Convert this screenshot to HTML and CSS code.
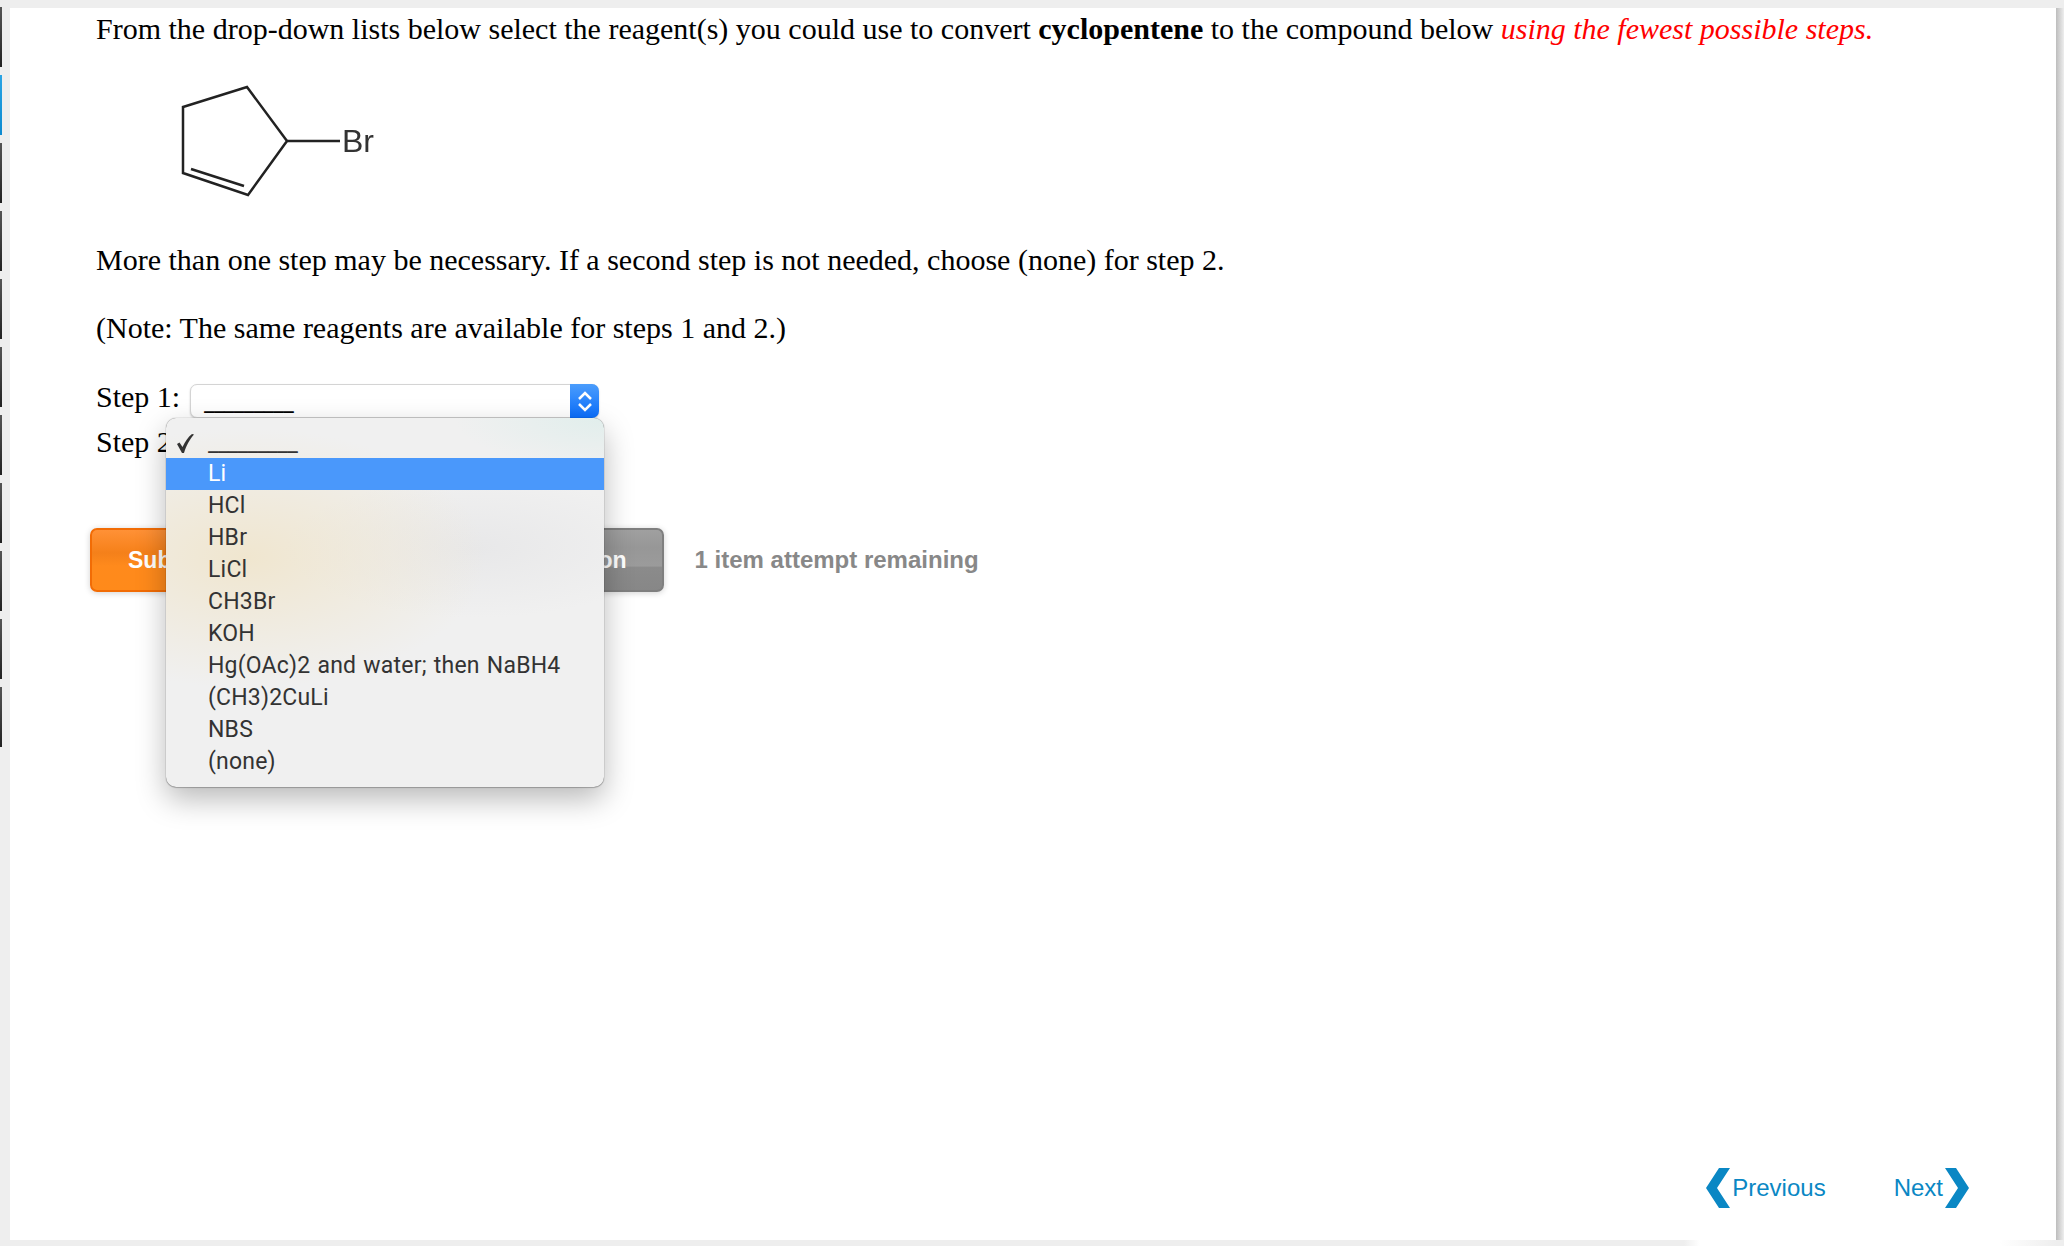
FILE: index.html
```html
<!DOCTYPE html>
<html lang="en">
<head>
    <meta charset="UTF-8">
    <title>Question</title>
    <link rel="stylesheet" href="styles.css">
</head>
<body>
    <div class="top-strip"></div>
    <div class="middle">
        <div class="tabs">
            <div class="tab"></div>
            <div class="tab tab-active"></div>
            <div class="tab"></div>
            <div class="tab"></div>
            <div class="tab"></div>
            <div class="tab"></div>
            <div class="tab"></div>
            <div class="tab"></div>
            <div class="tab"></div>
            <div class="tab"></div>
            <div class="tab"></div>
        </div>

        <div class="page">
            <p class="intro">From the drop-down lists below select the reagent(s) you could use to convert <b>cyclopentene</b> to the compound below <i class="hint">using the fewest possible steps.</i></p>

            <svg class="molecule" width="200" height="130" viewBox="0 0 200 130">
                <path class="bond" d="M6 33 L70 13 L110 67 L71 121 L6 99 Z"/>
                <path class="bond" d="M14 95 L67 112"/>
                <path class="bond" d="M110 67 L163 67"/>
                <text class="atom" x="165" y="78">Br</text>
            </svg>

            <p class="line-more">More than one step may be necessary. If a second step is not needed, choose (none) for step 2.</p>
            <p class="line-note">(Note: The same reagents are available for steps 1 and 2.)</p>

            <div class="steps">
                <div class="step step-one">
                    <span class="step-label">Step 1:</span>
                    <div class="select">
                        <span class="select-value">_________</span>
                        <span class="select-arrow">
                            <svg width="14" height="21" viewBox="0 0 14 21">
                                <path d="M1 8 L7 2 L13 8 M1 13 L7 19 L13 13"/>
                            </svg>
                        </span>
                    </div>
                </div>
                <div class="step">
                    <span class="step-label">Step 2:</span>
                </div>

                <ul class="menu">
                    <li class="menu-item menu-item-blank">
                        <svg class="check" width="17" height="19" viewBox="0 0 17 19"><path d="M0 10 L2.500 8.500 L5.500 13 C8 8 11 3 15 0 L17 0.500 C13 5 9 12 7 19 L5 19 Z"/></svg>
                        <span class="blank">_________</span>
                    </li>
                    <li class="menu-item menu-item-active">Li</li>
                    <li class="menu-item">HCl</li>
                    <li class="menu-item">HBr</li>
                    <li class="menu-item">LiCl</li>
                    <li class="menu-item">CH3Br</li>
                    <li class="menu-item">KOH</li>
                    <li class="menu-item">Hg(OAc)2 and water; then NaBH4</li>
                    <li class="menu-item">(CH3)2CuLi</li>
                    <li class="menu-item">NBS</li>
                    <li class="menu-item">(none)</li>
                </ul>
            </div>

            <div class="actions">
                <button class="btn btn-submit">Submit Answer</button>
                <button class="btn btn-retry">Try Another Version</button>
                <span class="attempts">1 item attempt remaining</span>
            </div>

            <div class="pager">
                <a class="pager-link">
                    <svg width="26" height="42" viewBox="0 0 26 42"><path d="M14 1 H25 L12 21 L25 41 H14 L1 21 Z"/></svg>
                    Previous
                </a>
                <a class="pager-link pager-next">
                    Next
                    <svg width="26" height="42" viewBox="0 0 26 42"><path d="M1 1 H12 L25 21 L12 41 H1 L14 21 Z"/></svg>
                </a>
            </div>
        </div>

        <div class="edge"></div>
    </div>
    <div class="bottom-strip"></div>
</body>
</html>
```

FILE: styles.css
```css
html, body {
    margin: 0;
    padding: 0;
    height: 1246px;
    overflow: hidden;
}

body {
    display: flex;
    flex-direction: column;
    background-color: #fff;
    font-family: 'Liberation Serif', serif;
    color: #000;
}

.top-strip {
    height: 8px;
    background-color: #eee;
}

.bottom-strip {
    height: 6px;
    background: linear-gradient(90deg, #eee 1684px, #fff 1700px, #fff 2000px, #eee 2056px);
}

.middle {
    flex: 1;
    display: flex;
    min-height: 0;
}

/* question tabs down the left side */
.tabs {
    width: 10px;
    flex-shrink: 0;
    display: flex;
    flex-direction: column;
    gap: 8px;
    background-color: #eee;
    margin-top: -1px;
}

.tab {
    width: 2px;
    height: 60px;
    background: linear-gradient(180deg, #555, #3c3c3c 50%, #222);
}

.tab-active {
    background: linear-gradient(180deg, #2aa4e4, #0d8ad0);
}

.page {
    flex: 1;
    display: flex;
    flex-direction: column;
    padding-left: 86px;
    background-color: #fff;
    min-width: 0;
}

.edge {
    width: 8px;
    flex-shrink: 0;
    background: linear-gradient(90deg, #bdbdbd, #eee);
}

p {
    margin: 0;
    font-size: 30px;
    line-height: 32px;
}

.intro {
    margin-top: 5px;
    white-space: nowrap;
}

.hint {
    color: #f00;
}

.molecule {
    display: block;
    margin: 29px 0 0 81px;
    filter: blur(0.5px);
}

.bond {
    fill: none;
    stroke: #222;
    stroke-width: 2.5;
}

.atom {
    font-family: 'Liberation Sans', sans-serif;
    font-size: 32px;
    fill: #333;
}

.line-more {
    margin-top: 40px;
}

.line-note {
    margin-top: 36px;
}

.steps {
    position: relative;
    margin-top: 40px;
}

.step {
    display: flex;
    align-items: center;
    height: 34px;
    margin-bottom: 11px;
    font-size: 30px;
}

.step-label {
    width: 94px;
    flex-shrink: 0;
    padding-bottom: 9px;
}

.select {
    width: 409px;
    height: 34px;
    box-sizing: border-box;
    display: flex;
    justify-content: space-between;
    border: 1px solid #d4d4d4;
    border-radius: 7px;
    background-color: #fff;
    box-shadow: 0 1px 2px rgba(0, 0, 0, 0.2);
    font-family: 'Roboto', sans-serif;
    font-size: 23px;
}

.select-value {
    padding-left: 13px;
    line-height: 38px;
    letter-spacing: -0.45px;
}

.select-arrow {
    width: 29px;
    margin: -1px;
    display: flex;
    align-items: center;
    justify-content: center;
    border-radius: 0 7px 7px 0;
    background: linear-gradient(180deg, #4b9dfc, #0a6dfb);
}

.select-arrow path {
    fill: none;
    stroke: #fff;
    stroke-width: 2.5;
}

.menu {
    position: absolute;
    left: 70px;
    top: 34px;
    width: 438px;
    margin: 0;
    padding: 8px 0 9px;
    list-style: none;
    box-sizing: border-box;
    border-radius: 10px;
    background:
        radial-gradient(ellipse 240px 130px at 80px 140px, #f0e6cf, rgba(238, 238, 238, 0)),
        radial-gradient(ellipse 150px 50px at 438px 0, #e1eeec, rgba(238, 238, 238, 0)),
        radial-gradient(ellipse 190px 70px at 310px 130px, #e8e8e9, rgba(238, 238, 238, 0)),
        #f0f0f0;
    box-shadow: 0 0 1px rgba(0, 0, 0, 0.6), 0 1px 1px rgba(0, 0, 0, 0.2), 0 12px 30px rgba(0, 0, 0, 0.28);
    font-family: 'Roboto', sans-serif;
    font-size: 23px;
    letter-spacing: 0.2px;
    word-spacing: 1.2px;
    color: #333;
}

.menu-item {
    position: relative;
    height: 32px;
    line-height: 32px;
    padding-left: 42px;
    white-space: nowrap;
}

.menu-item-blank {
    line-height: 36px;
}

.blank {
    letter-spacing: -0.45px;
}

.menu-item-active {
    background-color: #4a98fb;
    color: #fff;
}

.check {
    position: absolute;
    left: 11px;
    top: 8px;
    fill: #333;
}

.actions {
    display: flex;
    align-items: center;
    margin-top: 54px;
    margin-left: -6px;
}

.btn {
    height: 64px;
    padding: 0 36px;
    box-sizing: border-box;
    border-radius: 7px;
    font-family: 'Liberation Sans', sans-serif;
    font-weight: bold;
    font-size: 23px;
    color: #fff;
    box-shadow: 0 1px 6px rgba(0, 0, 0, 0.18);
}

.btn-submit {
    border: 2px solid #f26c05;
    background: linear-gradient(180deg, #ff9136, #f8841f 30%, #f4801a 38%, #ff8a1c 60%, #ff8a1a);
}

.btn-retry {
    width: 344px;
    margin-left: -13px;
    padding: 0 35px 0 0;
    text-align: right;
    border: 2px solid #7f7f7f;
    background: linear-gradient(180deg, #a0a0a0, #979797 30%, #9b9b9b 60%, #8b8b8b 62%, #878787);
}

.attempts {
    margin-left: 31px;
    font-family: 'Liberation Sans', sans-serif;
    font-weight: bold;
    font-size: 24px;
    color: #888;
}

.pager {
    margin-top: auto;
    display: flex;
    justify-content: flex-end;
    gap: 68px;
    padding: 0 86px 31px 0;
}

.pager-link {
    display: flex;
    align-items: center;
    gap: 1px;
    font-family: 'Liberation Sans', sans-serif;
    font-size: 24px;
    color: #0a87c4;
}

.pager-link path {
    fill: #0a87c4;
}
```
